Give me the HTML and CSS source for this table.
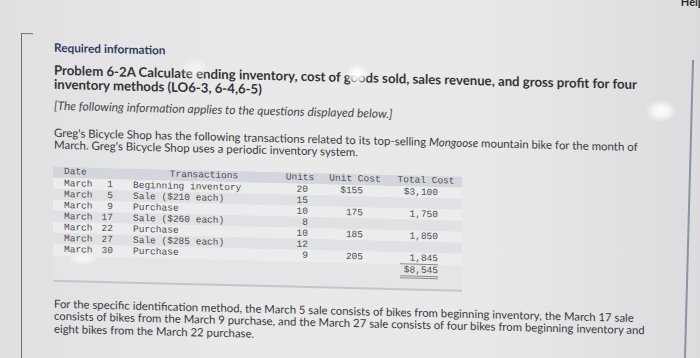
FILE: index.html
```html
<!DOCTYPE html>
<html lang="en">
<head>
    <meta charset="UTF-8">
    <title>Required information</title>
    <link rel="stylesheet" href="styles.css">
</head>
<body>
    <div class="topbar">
        <span class="help">Help</span>
    </div>

    <div class="sheet">
        <h2 class="req">Required information</h2>
        <h1 class="problem">Problem 6-2A Calculate ending inventory, cost of goods sold, sales revenue, and gross profit for four inventory methods (LO6-3, 6-4,6-5)</h1>
        <p class="note">[The following information applies to the questions displayed below.]</p>
        <p class="intro">Greg's Bicycle Shop has the following transactions related to its top-selling <em>Mongoose</em> mountain bike for the month of March. Greg's Bicycle Shop uses a periodic inventory system.</p>

        <table class="ledger">
            <colgroup>
                <col class="c-month">
                <col class="c-day">
                <col class="c-trans">
                <col class="c-units">
                <col class="c-cost">
                <col class="c-total">
            </colgroup>
            <thead>
                <tr>
                    <th colspan="2" class="date-h">Date</th>
                    <th class="trans-h">Transactions</th>
                    <th>Units</th>
                    <th>Unit Cost</th>
                    <th>Total Cost</th>
                </tr>
            </thead>
            <tbody>
                <tr><td class="month">March</td><td class="day">1</td><td class="trans">Beginning inventory</td><td class="units">20</td><td class="cost">$155</td><td class="total">$3,100</td></tr>
                <tr><td class="month">March</td><td class="day">5</td><td class="trans">Sale ($210 each)</td><td class="units">15</td><td class="cost"></td><td class="total"></td></tr>
                <tr><td class="month">March</td><td class="day">9</td><td class="trans">Purchase</td><td class="units">10</td><td class="cost">175</td><td class="total">1,750</td></tr>
                <tr><td class="month">March</td><td class="day">17</td><td class="trans">Sale ($260 each)</td><td class="units">8</td><td class="cost"></td><td class="total"></td></tr>
                <tr><td class="month">March</td><td class="day">22</td><td class="trans">Purchase</td><td class="units">10</td><td class="cost">185</td><td class="total">1,850</td></tr>
                <tr><td class="month">March</td><td class="day">27</td><td class="trans">Sale ($285 each)</td><td class="units">12</td><td class="cost"></td><td class="total"></td></tr>
                <tr><td class="month">March</td><td class="day">30</td><td class="trans">Purchase</td><td class="units">9</td><td class="cost">205</td><td class="total"><span class="sub">1,845</span></td></tr>
            </tbody>
            <tfoot>
                <tr><td colspan="5"></td><td class="total"><span class="grand">$8,545</span></td></tr>
            </tfoot>
        </table>

        <p class="spec">For the specific identification method, the March 5 sale consists of bikes from beginning inventory, the March 17 sale consists of bikes from the March 9 purchase, and the March 27 sale consists of four bikes from beginning inventory and eight bikes from the March 22 purchase.</p>
    </div>

    <div class="edge"></div>
    <div class="glare g-title"></div>
    <div class="glare g-top"></div>
    <div class="glare g-right"></div>
    <div class="glare g-table"></div>
</body>
</html>
```

FILE: styles.css
```css
body {
    margin: 0;
    height: 358px;
    overflow: hidden;
    position: relative;
    background: linear-gradient(90deg, #e0e0e2 0%, #e9e9ea 35%, #e8e8e9 70%, #dcdcde 100%);
    font-family: Lato, "Open Sans", sans-serif;
    color: #3a3a3a;
}

.topbar {
    height: 33px;
    display: flex;
    justify-content: flex-end;
}

.help {
    font-size: 11px;
    font-weight: 700;
    color: #2e2e2e;
    line-height: 12px;
    margin-top: -4px;
    margin-right: -4px;
}

.sheet {
    position: relative;
    height: 322px;
    margin: 0 10px 0 21px;
    padding: 3px 0 0 32px;
    border-left: 1px solid #6e6e6e;
    transform: skewY(1.4deg);
    transform-origin: 0 0;
}

/* little tick at the top of the frame line */
.sheet::before {
    content: "";
    position: absolute;
    left: 0;
    top: 0;
    width: 11px;
    height: 1px;
    background-color: #7a7a7a;
}

.req {
    margin: 0;
    padding-top: 4px;
    font-size: 11.8px;
    line-height: 14px;
    font-weight: 700;
    color: #2f3e62;
}

.problem {
    margin: 8px 0 0;
    max-width: 592px;
    font-size: 13.2px;
    line-height: 14px;
    font-weight: 700;
    color: #343434;
}

.note {
    margin: 9px 0 0;
    font-size: 12px;
    line-height: 12px;
    font-style: italic;
    color: #474747;
}

.intro {
    margin: 15px 0 0;
    max-width: 592px;
    font-size: 11.45px;
    line-height: 12px;
}

.ledger {
    margin: 16px 0 0 -1px;
    width: 409px;
    table-layout: fixed;
    border-collapse: collapse;
    border-bottom: 2px solid #c2c5cc;
    font-family: "Liberation Mono", monospace;
    font-size: 9.5px;
    line-height: 11px;
    color: #4d4d4d;
}

.c-month { width: 47px; }
.c-day { width: 20px; }
.c-trans { width: 160px; }
.c-units { width: 40px; }
.c-cost { width: 70px; }
.c-total { width: 72px; }

.ledger th {
    padding: 0;
    font-weight: normal;
    text-align: center;
    background-color: #d3d6dc;
    color: #505050;
    line-height: 10.5px;
}

.ledger td {
    padding: 0;
    white-space: nowrap;
}

.ledger .date-h {
    text-align: left;
    padding-left: 11px;
}

.ledger .trans-h {
    padding-left: 8px;
}

.ledger tbody tr:nth-child(odd) {
    background-color: #ececed;
}

.ledger tbody tr:nth-child(even) {
    background-color: #e0e1e4;
}

.ledger tfoot tr {
    background-color: #e4e5e7;
}

.ledger tfoot td {
    height: 11px;
    padding-bottom: 10px;
}

.month {
    padding-left: 11px !important;
}

.day {
    text-align: right;
    padding-right: 7px !important;
}

.trans {
    padding-left: 13px !important;
}

.units {
    text-align: right;
    padding-right: 12px !important;
}

.cost {
    text-align: right;
    padding-right: 27px !important;
}

.total {
    text-align: right;
    padding-right: 24px !important;
}

.sub,
.grand {
    display: inline-block;
    min-width: 38px;
}

.sub {
    border-bottom: 1px solid #8a8a8a;
}

.grand {
    border-bottom: 3px double #8c8c8c;
}

.spec {
    margin: 16px 0 0;
    max-width: 592px;
    font-size: 11.35px;
    line-height: 12.5px;
}

/* right edge of the screen frame, slightly tilted in the photo */
.edge {
    position: absolute;
    left: 688px;
    top: 60px;
    width: 1.5px;
    height: 298px;
    background-color: #8b93a6;
    transform: rotate(1.55deg);
}

.glare {
    position: absolute;
    border-radius: 50%;
    pointer-events: none;
    background: radial-gradient(closest-side, rgba(255,255,255,0.97) 0%, rgba(255,255,255,0.75) 45%, rgba(255,255,255,0) 100%);
}

.g-title {
    left: 345px;
    top: 64px;
    width: 24px;
    height: 22px;
}

.g-top {
    left: 180px;
    top: 58px;
    width: 30px;
    height: 22px;
    opacity: 0.5;
}

.g-right {
    left: 645px;
    top: 100px;
    width: 32px;
    height: 22px;
}

.g-table {
    left: 68px;
    top: 253px;
    width: 30px;
    height: 12px;
    opacity: 0.8;
}
```
